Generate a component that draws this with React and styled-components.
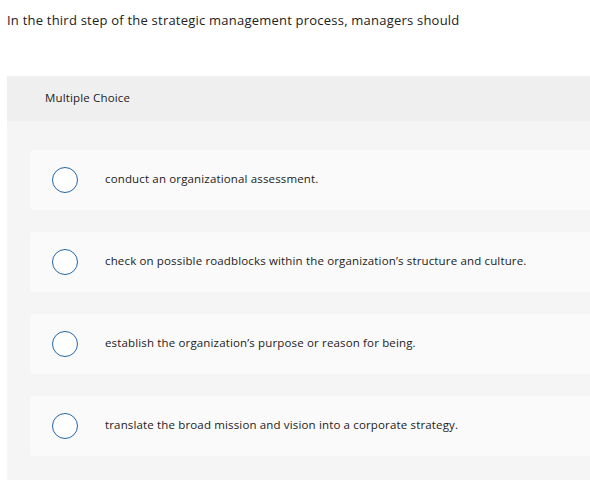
import React from "react";
import styled, { createGlobalStyle } from "styled-components";

const Global = createGlobalStyle`
  html, body { margin: 0; padding: 0; background: #ffffff; }
  body { font-family: "Open Sans", Lato, Arial, sans-serif; color: #222; }
`;

const Page = styled.div`
  width: 590px;
  height: 480px;
  overflow: hidden;
  padding: 11px 0 0 7px;
  box-sizing: border-box;
`;

const Question = styled.p`
  margin: 0;
  font-size: 13px;
  letter-spacing: 0.22px;
  line-height: 18px;
  color: #222;
`;

const Panel = styled.section`
  margin-top: 47px;
  background: #f5f5f5;
  height: 420px;
`;

const Header = styled.div`
  height: 45px;
  background: #efefef;
  display: flex;
  align-items: center;
  padding: 0 0 2px 38px;
  box-sizing: border-box;
  font-size: 11.5px;
  letter-spacing: 0.15px;
  color: #222;
`;

const List = styled.div`
  display: flex;
  flex-direction: column;
  gap: 22px;
  padding: 29px 0 0 23px;
`;

const Card = styled.label`
  height: 60px;
  background: #fafafa;
  border-radius: 4px 0 0 4px;
  display: flex;
  align-items: center;
  padding-left: 22px;
  cursor: pointer;
`;

const Radio = styled.span`
  width: 26px;
  height: 26px;
  box-sizing: border-box;
  border: 1.5px solid #2366a8;
  border-radius: 50%;
  background: #fff;
  flex: none;
`;

const OptionText = styled.span`
  margin-left: 27px;
  padding-bottom: 3px;
  font-size: 11.5px;
  letter-spacing: 0.15px;
  color: #222;
`;

const options = [
  "conduct an organizational assessment.",
  "check on possible roadblocks within the organization\u2019s structure and culture.",
  "establish the organization\u2019s purpose or reason for being.",
  "translate the broad mission and vision into a corporate strategy.",
];

export default function App() {
  return (
    <>
      <Global />
      <Page>
        <Question>In the third step of the strategic management process, managers should</Question>
        <Panel>
          <Header>Multiple Choice</Header>
          <List>
            {options.map((o) => (
              <Card key={o}>
                <Radio />
                <OptionText>{o}</OptionText>
              </Card>
            ))}
          </List>
        </Panel>
      </Page>
    </>
  );
}
